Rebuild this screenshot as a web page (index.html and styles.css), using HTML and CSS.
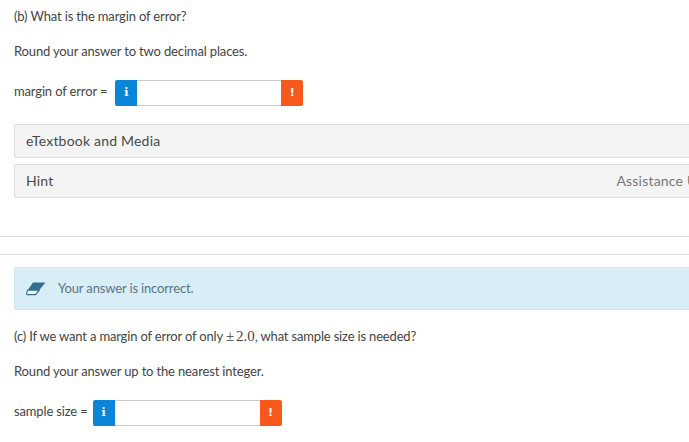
FILE: index.html
```html
<!DOCTYPE html>
<html lang="en">
<head>
<meta charset="utf-8">
<title>Question</title>
<link rel="stylesheet" href="styles.css">
</head>
<body>
<section class="part part-b">
  <p class="line first">(b) What is the margin of error?</p>
  <p class="line">Round your answer to two decimal places.</p>
  <div class="answer">
    <span class="label">margin of error =</span>
    <span class="btn info">i</span>
    <span class="field"></span>
    <span class="btn warn">!</span>
  </div>
  <div class="panel">eTextbook and Media</div>
  <div class="panel hint"><span>Hint</span><span class="assist">Assistance Used</span></div>
</section>
<hr class="rule one">
<hr class="rule two">
<section class="part part-c">
  <div class="alert">
    <svg class="eraser" width="20" height="14" viewBox="0 0 20 14" aria-hidden="true">
      <path d="M7 .6H19.4L13.2 8.2H1.6Z" fill="#2f6f8f"/>
      <path d="M1.6 8.2H13.2L9.6 12.6H1.4C.6 12.6 .3 11.9 .7 11.2Z" fill="#eef7fb" stroke="#2f6f8f" stroke-width="1.1"/>
    </svg>
    <span class="alert-text">Your answer is incorrect.</span>
  </div>
  <p class="line line-tight">(c) If we want a margin of error of only <span class="math"><span class="pm">±</span>2.0</span>, what sample size is needed?</p>
  <p class="line">Round your answer up to the nearest integer.</p>
  <div class="answer">
    <span class="label label-short">sample size =</span>
    <span class="btn info">i</span>
    <span class="field field-wide"></span>
    <span class="btn warn">!</span>
  </div>
</section>
</body>
</html>
```
FILE: styles.css
```css
html, body {
  margin: 0;
  padding: 0;
  background: #fff;
  overflow: hidden;
  height: 442px;
}
body {
  font-family: Lato, sans-serif;
  font-size: 13px;
  line-height: 18px;
  color: #444;
  letter-spacing: -0.15px;
}
.part {
  padding-left: 14px;
}
.part-b {
  padding-top: 7px;
}
.line {
  margin: 0 0 17px;
}
.line-tight {
  letter-spacing: -0.17px;
}
.answer {
  display: flex;
  align-items: center;
  height: 26px;
  margin-top: 20px;
}
.label {
  margin-right: 8px;
  position: relative;
  top: -2px;
}
.label-short {
  margin-right: 5px;
}
.btn {
  width: 22px;
  height: 26px;
  box-sizing: border-box;
  display: flex;
  align-items: center;
  justify-content: center;
  color: #fff;
  font-family: "DejaVu Serif", serif;
  font-weight: 700;
  font-size: 11px;
  letter-spacing: 0;
}
.info {
  background: #0b85d8;
  border-radius: 2px 0 0 2px;
}
.warn {
  background: #f7591a;
  border-radius: 0 2px 2px 0;
  font-family: "DejaVu Sans", sans-serif;
}
.field {
  width: 144px;
  height: 26px;
  box-sizing: border-box;
  border: 1px solid #ccc;
  border-width: 1px 0;
  background: #fff;
}
.field-wide {
  width: 145px;
}
.panel {
  width: 718px;
  height: 34px;
  box-sizing: border-box;
  margin-top: 6px;
  padding: 0 12px 0 11px;
  display: flex;
  align-items: center;
  justify-content: space-between;
  background: #f4f4f4;
  border: 1px solid #ddd;
  border-radius: 2px;
  font-size: 14px;
  letter-spacing: 0.2px;
  color: #4a4a4a;
}
.answer + .panel {
  margin-top: 18px;
}
.assist {
  color: #777;
}
.rule {
  margin: 0;
  border: 0;
  border-top: 1px solid #ddd;
}
.rule.one {
  margin-top: 38px;
}
.rule.two {
  margin-top: 17px;
}
.part-c {
  padding-top: 12px;
}
.alert {
  width: 720px;
  height: 43px;
  box-sizing: border-box;
  margin-bottom: 17px;
  padding-left: 11px;
  display: flex;
  align-items: center;
  gap: 12px;
  background: #d9edf7;
  border: 1px solid #cfe6ee;
  border-radius: 2px;
  color: #5a7585;
}
.alert-text {
  position: relative;
  top: -1px;
}
.math {
  font-family: "Liberation Serif", serif;
  font-size: 15px;
  letter-spacing: 0;
}
.pm {
  margin: 0 2px 0 0;
}
```
